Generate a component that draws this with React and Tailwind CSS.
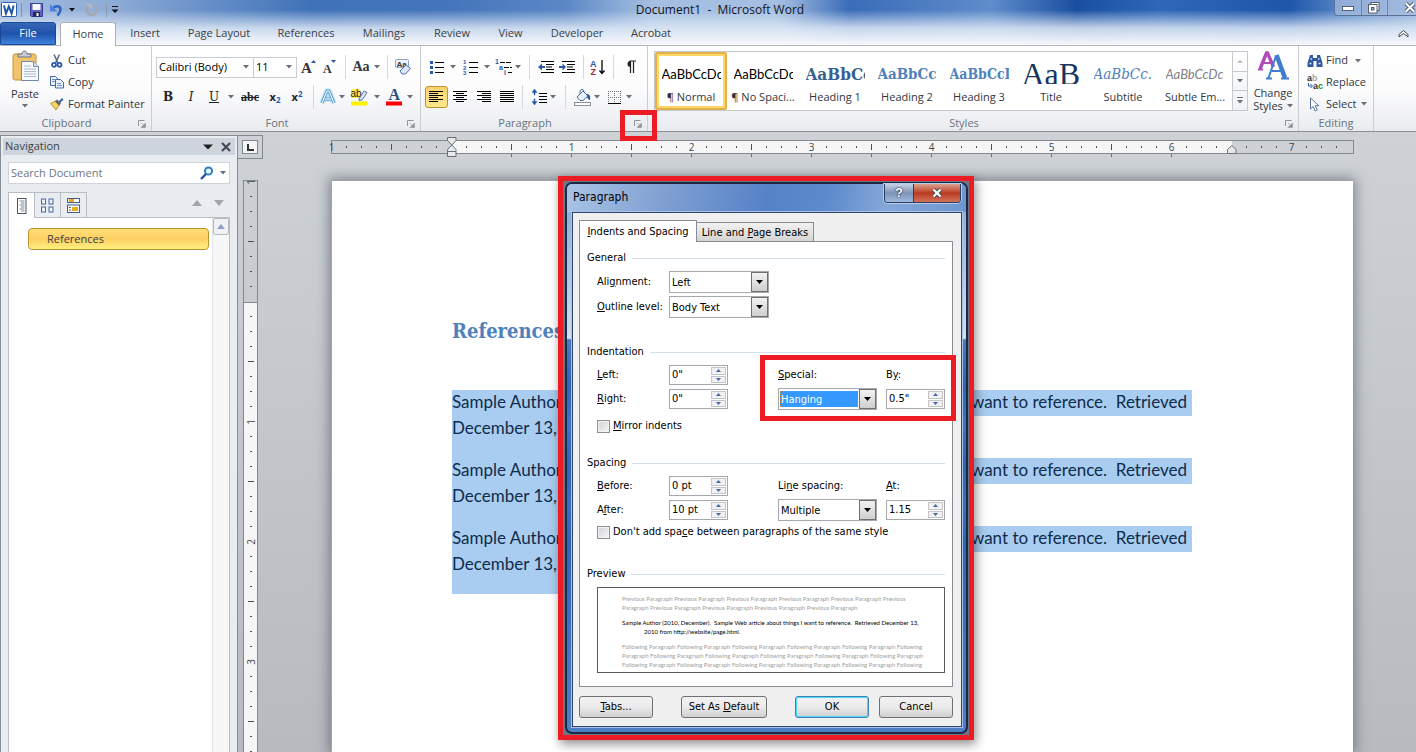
import React from "react";

const SERIF = "font-[family-name:'DejaVu_Serif_Condensed','DejaVu_Serif',serif]";
const BODY = "font-[family-name:Lato,'Open_Sans',sans-serif]";
const DIALOG = "font-[family-name:'DejaVu_Sans_Condensed','DejaVu_Sans',sans-serif]";

/* ---------- small shared pieces ---------- */

function Caret({ className = "" }) {
  return (
    <svg width="6" height="4" viewBox="0 0 6 4" className={"shrink-0 " + className} aria-hidden="true">
      <path d="M0 0h6L3 3.4z" fill="#6a6f77" />
    </svg>
  );
}

function ArrowButton({ label, className }) {
  return (
    <button aria-label={label} className={"flex h-5 items-center justify-center " + className}>
      <Caret />
    </button>
  );
}

function Separator({ className }) {
  return (
    <div className={"flex h-6 justify-center " + className}>
      <div className="h-full w-px bg-[#d5d8dd]" />
    </div>
  );
}

function LauncherIcon() {
  return (
    <svg width="8" height="8" viewBox="0 0 8 8" aria-hidden="true">
      <path d="M0.5 6V0.5H6.5" fill="none" stroke="#8d939b" />
      <path d="M3 3l2.5 2.5M7.5 3v4.5H3z" fill="#8d939b" stroke="#8d939b" strokeWidth="0.6" />
    </svg>
  );
}

function Group({ title, className, children, launcher, highlight }) {
  return (
    <section aria-label={title} className={"flex shrink-0 flex-col border-r border-[#c9ccd1] " + className}>
      <div className="flex h-[69px] pt-1">{children}</div>
      <div className="flex h-4 items-center">
        <span className="flex-1 text-center text-[#6a7280]">{title}</span>
        {launcher && (
          <span className="flex w-[18px] justify-center">
            <button aria-label={title + " settings"} className="relative mt-0.5">
              <LauncherIcon />
              {highlight && (
                <span className="pointer-events-none absolute -left-[14px] -top-[10px] z-10 h-[31px] w-[37px] border-[5px] border-[#ed1c24]" />
              )}
            </button>
          </span>
        )}
      </div>
    </section>
  );
}

/* ---------- title bar ---------- */

function TitleBar() {
  return (
    <div className="flex h-[22px] items-start">
      <div className="flex h-5 w-[130px] shrink-0 items-center">
        <svg width="20" height="20" viewBox="0 0 20 20" aria-hidden="true">
          <rect x="1.5" y="2.5" width="15" height="14" rx="1" fill="#fff" stroke="#2a5ea8" />
          <path d="M4 5.5l2 8 2.8-7 2.8 7 2-8" fill="none" stroke="#1f56a5" strokeWidth="2" />
        </svg>
        <span className="ml-px h-3.5 w-px bg-[#7f95b6]" />
        <button aria-label="Save" className="ml-1.5">
          <svg width="16" height="16" viewBox="0 0 16 16">
            <path d="M2.5 1.5h12v13h-11l-1-1z" fill="#5b63c9" stroke="#3a3f94" />
            <rect x="4.5" y="2" width="8" height="6" fill="#f6f8fd" />
            <rect x="5" y="10" width="7" height="4.5" fill="#26284f" />
            <rect x="8.5" y="11" width="2" height="3" fill="#fff" />
          </svg>
        </button>
        <button aria-label="Undo" className="ml-1">
          <svg width="18" height="16" viewBox="0 0 18 16">
            <path d="M4.5 7C7 3.5 12.5 3 12.5 7.5c0 2.5-1.5 4-3 6" fill="none" stroke="#2f66c4" strokeWidth="2.6" />
            <path d="M2 2v7.5h7.5z" fill="#4d82d8" />
          </svg>
        </button>
        <button aria-label="Undo history" className="flex h-5 w-3 items-center justify-center">
          <svg width="6" height="4" viewBox="0 0 6 4"><path d="M0 0h6L3 3.4z" fill="#111" /></svg>
        </button>
        <button aria-label="Repeat" className="ml-1.5">
          <svg width="16" height="16" viewBox="0 0 16 16">
            <path d="M10.5 3.6a5 5 0 1 1-6.500 1" fill="none" stroke="#a3a7af" strokeWidth="2.8" />
            <path d="M1.500 1.500h6.500v6z" fill="#b4b7bd" />
          </svg>
        </button>
        <span className="ml-1.5 h-3.5 w-px bg-[#8797ae]" />
        <button aria-label="Customize quick access" className="ml-1">
          <svg width="8" height="8" viewBox="0 0 8 8">
            <path d="M1 0.5h6" stroke="#111" />
            <path d="M0.5 3.5h7L4 7z" fill="#111" />
          </svg>
        </button>
      </div>
      <h1 className="flex-1 whitespace-pre pr-6 text-center text-xs leading-5 text-[#10151c]">Document1  -  Microsoft Word</h1>
      <div className="flex h-4 w-[82px] shrink-0 overflow-hidden rounded-bl border-b border-l border-[#5b7194] bg-[#a9bfdf]/70">
        <button aria-label="Minimize" className="flex w-7 items-center justify-center border-r border-[#6d84a8]">
          <svg width="14" height="8" viewBox="0 0 14 8"><rect x="1.5" y="2.5" width="11" height="4" fill="#fff" stroke="#555f70" /></svg>
        </button>
        <button aria-label="Restore" className="flex w-7 items-center justify-center border-r border-[#6d84a8]">
          <svg width="14" height="14" viewBox="0 0 14 14">
            <rect x="4" y="1.5" width="8" height="8" fill="#fff" stroke="#555f70" />
            <rect x="1.5" y="3.5" width="8.5" height="8.5" fill="#fff" stroke="#555f70" />
            <rect x="4.5" y="6.5" width="2.5" height="2.5" fill="#8fabd3" stroke="#555f70" />
          </svg>
        </button>
        <button aria-label="Close" className="flex w-7 shrink-0 items-center justify-end">
          <svg width="12" height="12" viewBox="0 0 12 12"><path d="M2 1.5l8 8M10 1.5l-8 8" stroke="#555f70" strokeWidth="4" /><path d="M2 1.5l8 8M10 1.5l-8 8" stroke="#fff" strokeWidth="2" /></svg>
        </button>
      </div>
    </div>
  );
}

function RibbonTabs() {
  const tabs = [
    ["Insert", "w-[58px]"],
    ["Page Layout", "w-[90px]"],
    ["References", "w-[84px]"],
    ["Mailings", "w-[72px]"],
    ["Review", "w-16"],
    ["View", "w-[53px]"],
    ["Developer", "w-20"],
    ["Acrobat", "w-[68px]"],
  ];
  return (
    <nav className="flex h-6 items-stretch border-b border-[#b3b9c2] text-[#3b3f45]">
      <button className="w-14 rounded-t-[3px] border border-[#1c4a9b] bg-linear-to-b from-[#3567b8] via-[#1f52ab] to-[#3f83dc] text-white">File</button>
      <button className="-mb-px ml-1 w-14 rounded-t-[3px] border border-b-0 border-[#a9b1bd] bg-white">Home</button>
      {tabs.map(([name, w]) => (
        <button key={name} className={"shrink-0 whitespace-nowrap " + w}>{name}</button>
      ))}
      <span className="flex-1" />
      <button aria-label="Minimize the ribbon" className="w-[18px]">
        <svg width="11" height="9" viewBox="0 0 11 9"><path d="M1 5.5L5.5 1.5 10 5.5v2.3L5.5 4.6 1 7.8z" fill="#fff" stroke="#3c4450" /></svg>
      </button>
    </nav>
  );
}

/* ---------- ribbon groups ---------- */

function ClipboardGroup() {
  return (
    <Group title="Clipboard" className="w-[152px]" launcher>
      <button className="flex w-[50px] flex-col items-center">
        <svg width="30" height="32" viewBox="0 0 30 32" aria-hidden="true">
          <rect x="3" y="4" width="23" height="26" rx="2" fill="#f0c36c" stroke="#c8923a" />
          <path d="M8 7V4h4c0-4 5-4 5 0h4v3z" fill="#c9ccd1" stroke="#6f747c" />
          <path d="M11.5 11.5h12l5 5v14h-17z" fill="#f7f9fc" stroke="#7189ad" />
          <path d="M23.5 11.5v5h5" fill="#dbe4f0" stroke="#7189ad" />
          <path d="M14 16h7M14 19h12M14 21.5h12M14 24h12M14 26.5h12" stroke="#a9bbd5" />
        </svg>
        <span className="mt-1 leading-4">Paste</span>
        <Caret className="mt-0.5" />
      </button>
      <div className="flex flex-col">
        <button className="flex h-[21px] items-center gap-1">
          <svg width="14" height="14" viewBox="0 0 14 14" aria-hidden="true">
            <path d="M4 0.5l4 8.5M9.5 0.5L5.5 9" stroke="#5a6880" strokeWidth="1.5" fill="none" />
            <circle cx="4" cy="10.8" r="2" fill="none" stroke="#2a58ad" strokeWidth="1.8" />
            <circle cx="9.5" cy="10.8" r="2" fill="none" stroke="#2a58ad" strokeWidth="1.8" />
          </svg>
          Cut
        </button>
        <button className="flex h-[22px] items-center gap-1">
          <svg width="14" height="14" viewBox="0 0 14 14" aria-hidden="true">
            <path d="M0.5 1.5h5l2 2v7h-7z" fill="#eaf1fb" stroke="#3e69ad" />
            <path d="M5.5 4.5h5l3 3v5.5h-8z" fill="#eaf1fb" stroke="#3e69ad" />
            <path d="M2 4.5h3M2 6.5h3M7 8.5h4M7 10.5h5" stroke="#6f93cb" />
          </svg>
          Copy
        </button>
        <button className="flex h-[22px] items-center gap-1 whitespace-nowrap">
          <svg width="14" height="14" viewBox="0 0 14 14" aria-hidden="true">
            <path d="M0.5 6.5l5-2.5 4 4-3.500 5z" fill="#f4d35e" stroke="#a8882b" strokeWidth="0.8" />
            <path d="M5 4.500l2-2 4 4-2 2z" fill="#5c6069" />
            <path d="M8.5 4.5L12 1l1.5 1.5L10 6z" fill="#3a62ae" />
          </svg>
          Format Painter
        </button>
      </div>
    </Group>
  );
}

function FontGroup() {
  return (
    <Group title="Font" className="w-[269px]" launcher>
      <div className="flex flex-col gap-2 pl-1 pt-1.5">
        <div className="flex h-[22px] items-center">
          <label className="flex h-[21px] w-[98px] items-center border border-[#c9ccd2] bg-white pr-1">
            <input aria-label="Font name" defaultValue="Calibri (Body)" className="w-full min-w-0 bg-transparent pl-0.5 text-black outline-none" />
            <Caret />
          </label>
          <label className="-ml-px flex h-[21px] w-11 items-center border border-[#c9ccd2] bg-white pr-1">
            <input aria-label="Font size" defaultValue="11" className="w-full min-w-0 bg-transparent pl-0.5 text-black outline-none" />
            <Caret />
          </label>
          <button aria-label="Grow font" className="flex w-[22px] justify-center">
            <svg width="16" height="16" viewBox="0 0 16 16"><text x="1" y="14" fontSize="15" fontWeight="bold" fill="#333" fontFamily="Liberation Serif">A</text><path d="M11 4h5l-2.5-3z" fill="#2a58ad" /></svg>
          </button>
          <button aria-label="Shrink font" className="flex w-[22px] justify-center">
            <svg width="16" height="16" viewBox="0 0 16 16"><text x="1" y="14" fontSize="12" fontWeight="bold" fill="#333" fontFamily="Liberation Serif">A</text><path d="M9 1h5l-2.5 3z" fill="#2a58ad" /></svg>
          </button>
          <Separator className="w-2" />
          <button aria-label="Change case" className="flex w-[34px] items-center justify-center gap-1 font-[family-name:'Liberation_Serif',serif] text-sm font-bold">Aa<Caret /></button>
          <Separator className="w-2" />
          <button aria-label="Clear formatting" className="flex w-6 justify-center">
            <svg width="18" height="18" viewBox="0 0 18 18">
              <rect x="1.5" y="1.5" width="13" height="8" rx="1" fill="#eef3fb" stroke="#8ba3c9" />
              <text x="2.5" y="8.5" fontSize="8" fontWeight="bold" fill="#333" fontFamily="Liberation Sans">Aa</text>
              <path d="M6 13l6-6 4.500 3.500-5 5.500H8z" fill="#dce8f8" stroke="#4a72b5" />
            </svg>
          </button>
        </div>
        <div className="flex h-[22px] items-center text-[#222]">
          <button aria-label="Bold" className="w-6 font-[family-name:'DejaVu_Serif',serif] text-xs font-bold">B</button>
          <button aria-label="Italic" className="w-[22px] font-[family-name:'DejaVu_Serif',serif] text-xs italic">I</button>
          <button aria-label="Underline" className="w-6 font-[family-name:'DejaVu_Serif',serif] text-xs underline">U</button>
          <ArrowButton label="Underline style" className="w-2.5" />
          <button aria-label="Strikethrough" className="w-7 font-[family-name:'Liberation_Serif',serif] text-xs font-bold line-through">abc</button>
          <button aria-label="Subscript" className="w-[22px] font-bold">x<sub className="text-[8px] text-[#2a58ad]">2</sub></button>
          <button aria-label="Superscript" className="w-[22px] font-bold">x<sup className="text-[8px] text-[#2a58ad]">2</sup></button>
          <Separator className="w-2.5" />
          <button aria-label="Text effects" className="flex w-5 justify-center">
            <svg width="18" height="18" viewBox="0 0 18 18">
              <path d="M3 15L8 3h2l5 12M5.5 11h7" fill="none" stroke="#b4dcf5" strokeWidth="5" strokeLinejoin="round" />
              <path d="M3 15L8 3h2l5 12M5.5 11h7" fill="none" stroke="#5b9fd2" strokeWidth="2.8" />
              <path d="M3 15L8 3h2l5 12M5.5 11h7" fill="none" stroke="#fff" strokeWidth="1" />
            </svg>
          </button>
          <ArrowButton label="Text effects menu" className="w-2" />
          <button aria-label="Highlight colour" className="flex w-[26px] justify-center">
            <svg width="18" height="18" viewBox="0 0 18 18">
              <rect x="1" y="1" width="9" height="9" fill="#fff04a" />
              <text x="0.5" y="9" fontSize="10" fill="#222" fontFamily="Liberation Sans">ab</text>
              <path d="M9 11l5-8 3 1.5-5 7.500-3 0.500z" fill="#dbe6f6" stroke="#5874a6" />
              <rect x="1" y="13.5" width="16" height="4" fill="#fff200" />
            </svg>
          </button>
          <ArrowButton label="Highlight menu" className="w-2.5" />
          <button aria-label="Font colour" className="flex w-6 justify-center">
            <svg width="16" height="18" viewBox="0 0 16 18">
              <text x="2.5" y="12" fontSize="16" fontWeight="bold" fill="#2b4d86" fontFamily="Liberation Serif">A</text>
              <rect y="13.5" width="16" height="4" fill="#f00" />
            </svg>
          </button>
          <ArrowButton label="Font colour menu" className="w-2" />
        </div>
      </div>
    </Group>
  );
}

function LinesIcon({ rows }) {
  return (
    <svg width="15" height="13" viewBox="0 0 15 13" aria-hidden="true">
      {rows.map(([x, w], i) => (
        <rect key={i} x={x} y={i * 2} width={w} height="1" fill="#000" />
      ))}
    </svg>
  );
}

function ParagraphGroup() {
  return (
    <Group title="Paragraph" className="w-[227px]" launcher highlight>
      <div className="flex flex-col gap-2 pl-1 pt-1.5">
        <div className="flex h-[22px] items-center">
          <button aria-label="Bullets" className="flex w-6 justify-center">
            <svg width="14" height="14" viewBox="0 0 14 14"><path d="M5 2.5h9M5 7.5h9M5 12.5h9" stroke="#000" /><path d="M0 1h3v3H0zM0 6h3v3H0zM0 11h3v3H0z" fill="#2a58ad" /></svg>
          </button>
          <ArrowButton label="Bullet library" className="w-2" />
          <button aria-label="Numbering" className="flex w-[26px] justify-center">
            <svg width="15" height="16" viewBox="0 0 15 16"><path d="M6 3.5h9M6 8.5h9M6 13.5h9" stroke="#000" /><g fontSize="6" fontWeight="bold" fill="#2a58ad" fontFamily="Liberation Sans"><text x="0" y="5">1</text><text x="0" y="10.500">2</text><text x="0" y="16">3</text></g></svg>
          </button>
          <ArrowButton label="Numbering library" className="w-2" />
          <button aria-label="Multilevel list" className="flex w-6 justify-center">
            <svg width="17" height="16" viewBox="0 0 17 16"><path d="M5 3.5h11M9 8.5h8M13 13.5h4" stroke="#000" strokeDasharray="5 1" /><g fontSize="7" fontWeight="bold" fill="#2a58ad" fontFamily="Liberation Sans"><text x="0" y="5">1</text><text x="4" y="10.5">a</text><text x="9" y="16">i</text></g></svg>
          </button>
          <ArrowButton label="Multilevel library" className="w-1.5" />
          <Separator className="w-4" />
          <button aria-label="Decrease indent" className="flex w-[18px] justify-center">
            <svg width="16" height="13" viewBox="0 0 16 13"><path d="M3 0.5h13M8 3.5h8M8 6h6M8 8.5h8M3 11.5h13" stroke="#000" strokeWidth="1.2" /><path d="M0 6l4-3.500V5h3v2H4v2.5z" fill="#2a58ad" /></svg>
          </button>
          <button aria-label="Increase indent" className="flex w-6 justify-center">
            <svg width="16" height="13" viewBox="0 0 16 13"><path d="M3 0.5h13M8 3.5h8M8 6h6M8 8.5h8M3 11.5h13" stroke="#000" strokeWidth="1.2" /><path d="M7 6L3.500 2.5V5H0v2h3.500v2.5z" fill="#2a58ad" /></svg>
          </button>
          <Separator className="w-2" />
          <button aria-label="Sort" className="flex w-[22px] justify-center">
            <svg width="16" height="16" viewBox="0 0 16 16"><text x="0" y="7.5" fontSize="9" fontWeight="bold" fill="#2a58ad" fontFamily="Liberation Sans">A</text><text x="0.5" y="15.5" fontSize="9" fontWeight="bold" fill="#9c2f36" fontFamily="Liberation Sans">Z</text><path d="M12 1v13M9.5 11.5L12 14.5l2.5-3" fill="none" stroke="#000" strokeWidth="1.3" /></svg>
          </button>
          <Separator className="w-2" />
          <button aria-label="Show marks" className="flex w-7 justify-center">
            <svg width="12" height="14" viewBox="0 0 12 14"><path d="M5.500 1a3 3 0 0 0 0 6z" fill="#222" /><path d="M5.500 0.500v12.500M8.5 0.500v12.500M4.500 1h6.5" stroke="#222" strokeWidth="1.2" /></svg>
          </button>
        </div>
        <div className="flex h-[22px] items-center">
          <button aria-label="Align left" className="flex h-[22px] w-[23px] items-center justify-center rounded-[3px] border border-[#c2912f] bg-linear-to-b from-[#fbd271] to-[#ffe78a]">
            <LinesIcon rows={[[0, 14], [0, 9], [0, 14], [0, 9], [0, 14], [0, 9]]} />
          </button>
          <button aria-label="Align centre" className="flex w-6 justify-center">
            <LinesIcon rows={[[0, 14], [3, 8], [0, 14], [3, 8], [0, 14], [3, 8]]} />
          </button>
          <button aria-label="Align right" className="flex w-6 justify-center">
            <LinesIcon rows={[[0, 14], [5, 9], [0, 14], [5, 9], [0, 14], [5, 9]]} />
          </button>
          <button aria-label="Justify" className="flex w-[22px] justify-center">
            <LinesIcon rows={[[0, 14], [0, 14], [0, 14], [0, 14], [0, 14], [0, 14]]} />
          </button>
          <Separator className="w-2" />
          <button aria-label="Line spacing" className="flex w-[22px] justify-end">
            <svg width="16" height="16" viewBox="0 0 16 16"><path d="M7 4.5h8M7 7.5h8M7 10.5h8M7 13.5h8" stroke="#000" /><path d="M2.5 0L5 3.5H0zM2.5 16L5 12.5H0zM2 3h1v3H2zM2 10h1v3H2z" fill="#2a58ad" stroke="#2a58ad" strokeWidth="0.5" /></svg>
          </button>
          <ArrowButton label="Line spacing menu" className="w-2.5" />
          <Separator className="w-3.5" />
          <button aria-label="Shading" className="flex w-5 justify-center">
            <svg width="17" height="17" viewBox="0 0 17 17"><path d="M3 8l6-6 5 5-5 4.5H6z" fill="#e9eff9" stroke="#4a6a9f" /><path d="M6 5V2.5a2 2 0 0 1 4 0" fill="none" stroke="#4a6a9f" /><path d="M13 5c3 0 3.500 3 3 6C14 11 12.5 8 13 5z" fill="#2a58ad" /><rect x="0.5" y="13.5" width="16" height="3" fill="#fff" stroke="#8b8f96" /></svg>
          </button>
          <ArrowButton label="Shading menu" className="w-2.5" />
          <button aria-label="Borders" className="flex w-6 justify-center">
            <svg width="13" height="13" viewBox="0 0 13 13"><path d="M0.5 0v12M12.5 0v12M6.5 0v12M0 0.5h13M0 6.5h13" stroke="#6b6f76" strokeDasharray="1 1" /><path d="M0 12.5h13" stroke="#000" /></svg>
          </button>
          <ArrowButton label="Borders menu" className="w-1.5" />
        </div>
      </div>
    </Group>
  );
}

const STYLES = [
  { name: "¶ Normal", sample: "AaBbCcDc", cls: "text-[13px] text-black " + BODY, active: true },
  { name: "¶ No Spaci...", sample: "AaBbCcDc", cls: "text-[13px] text-black " + BODY },
  { name: "Heading 1", sample: "AaBbCc", cls: "text-[17px] font-bold text-[#365f91] " + SERIF },
  { name: "Heading 2", sample: "AaBbCc", cls: "text-[15px] font-bold text-[#4f81bd] " + SERIF },
  { name: "Heading 3", sample: "AaBbCcD", cls: "text-sm font-bold text-[#4f81bd] " + SERIF },
  { name: "Title", sample: "AaB", cls: "text-[32px] text-[#17365d] font-[family-name:'Liberation_Serif',serif]" },
  { name: "Subtitle", sample: "AaBbCc.", cls: "text-[15px] italic text-[#4f81bd] " + SERIF },
  { name: "Subtle Em...", sample: "AaBbCcDc", cls: "text-[13px] italic text-[#808080] " + BODY },
];

function StylesGroup() {
  return (
    <Group title="Styles" className="min-w-0 flex-1" launcher>
      <div className="ml-1.5 mt-px flex h-[60px] min-w-0 flex-1 border border-[#c5c8ce] bg-white">
        <div className="flex min-w-0 flex-1 overflow-hidden">
          {STYLES.map((s) => (
            <button
              key={s.name}
              className={
                "flex w-[72px] shrink-0 flex-col items-center rounded-[2px] border-2 " +
                (s.active ? "border-[#e3b04b] ring-2 ring-[#ffd765] ring-inset" : "border-transparent")
              }
            >
              <span className={"flex h-[30px] w-[59px] items-center overflow-hidden whitespace-nowrap pt-2.5 leading-5 " + s.cls}>{s.sample}</span>
              <span className="mt-[3px] whitespace-nowrap leading-5">{s.name}</span>
            </button>
          ))}
        </div>
        <div className="flex w-[15px] shrink-0 flex-col divide-y divide-[#c5c8ce] border-l border-[#c5c8ce] bg-linear-to-b from-white to-[#f1f2f5]">
          <button aria-label="Scroll styles up" className="flex flex-1 items-center justify-center"><Caret className="rotate-180 opacity-40" /></button>
          <button aria-label="Scroll styles down" className="flex flex-1 items-center justify-center"><Caret /></button>
          <button aria-label="More styles" className="flex flex-1 flex-col items-center justify-center gap-0.5"><span className="h-px w-1.5 bg-[#6a6f77]" /><Caret /></button>
        </div>
      </div>
      <button className="flex w-[50px] shrink-0 flex-col items-center text-center leading-[13px]">
        <svg width="32" height="30" viewBox="0 0 32 30" aria-hidden="true">
          <path d="M3 19L9.500 3h1l6 14" fill="none" stroke="#b04bb8" strokeWidth="3.4" />
          <path d="M6 13h9M1 19.500h5" stroke="#b04bb8" strokeWidth="2" />
          <path d="M19.500 5L28 28" fill="none" stroke="#3f7cd0" strokeWidth="4.500" />
          <path d="M19 6l-7.500 22M15 21h10M9 28.500h6M24 28.500h8" fill="none" stroke="#3f7cd0" strokeWidth="2" />
        </svg>
        <span className="mt-1.5">Change</span>
        <span className="flex items-center gap-1">Styles<Caret /></span>
      </button>
    </Group>
  );
}

function EditingGroup() {
  return (
    <Group title="Editing" className="w-[75px]">
      <div className="flex flex-col pl-2">
        <button className="flex h-[21px] items-center gap-[3px]">
          <svg width="16" height="14" viewBox="0 0 16 14" aria-hidden="true">
            <path d="M3 1h3v3h4V1h3l2.5 8v4h-6V7h-3v6h-6V9z" fill="#31599f" />
            <path d="M2.5 9.5h2M11.5 9.5h2M3.5 5h1.500M11 5h1.500" stroke="#dbe6f8" strokeWidth="1.3" />
          </svg>
          Find<Caret className="ml-1" />
        </button>
        <button className="flex h-[22px] items-center gap-[3px]">
          <svg width="16" height="16" viewBox="0 0 16 16" aria-hidden="true">
            <g fontSize="9" fontWeight="bold" fontFamily="Liberation Sans"><text x="0" y="7" fill="#333">a</text><text x="5" y="7" fill="#aaa">b</text><text x="6" y="15" fill="#333">a</text><text x="11" y="15" fill="#159427">c</text></g>
            <path d="M1.5 9v3h3M3.5 10l2 2-2 2" fill="none" stroke="#2a58ad" />
          </svg>
          Replace
        </button>
        <button className="flex h-[22px] items-center gap-[3px]">
          <svg width="16" height="15" viewBox="0 0 16 15" aria-hidden="true"><path d="M3.5 1v11l2.7-2.5 2 4.5 2-1-2-4.3h3.6z" fill="#fff" stroke="#5b76a6" /></svg>
          Select<Caret className="ml-0.5" />
        </button>
      </div>
    </Group>
  );
}

/* ---------- navigation pane ---------- */

function NavigationPane() {
  return (
    <aside className="flex w-[238px] shrink-0 flex-col border-l border-r border-t border-[#868c94] bg-[#e9ecf1] text-[#3b3f45]">
      <header className="mx-0.5 mt-0.5 flex h-[17px] items-center bg-[#cdd4dd] pl-0.5 pr-1">
        <h2 className="flex-1">Navigation</h2>
        <button aria-label="Pane options" className="mr-2"><svg width="10" height="6" viewBox="0 0 10 6"><path d="M0 0.5h10L5 5.5z" fill="#222" /></svg></button>
        <button aria-label="Close pane"><svg width="10" height="10" viewBox="0 0 10 10"><path d="M1 1l8 8M9 1L1 9" stroke="#444a52" strokeWidth="2.2" /></svg></button>
      </header>
      <div className="mx-[7px] mt-[7px] flex h-[22px] items-center border border-[#d0d4da] bg-white pr-[3px]">
        <input aria-label="Search document" placeholder="Search Document" className="min-w-0 flex-1 bg-transparent pl-0.5 outline-none placeholder:text-[#6f757e]" />
        <button aria-label="Search"><svg width="14" height="14" viewBox="0 0 14 14"><circle cx="8.5" cy="5" r="3.6" fill="#e6f4fc" stroke="#2f7fc4" strokeWidth="2" /><path d="M6 8l-5 5" stroke="#2450a4" strokeWidth="2.4" /></svg></button>
        <button aria-label="Search options" className="ml-1.5"><Caret /></button>
      </div>
      <div className="mx-[7px] mt-2 flex h-[25px] items-stretch">
        <button aria-label="Browse headings" className="relative -mb-px flex w-[27px] items-center justify-center border border-b-0 border-[#b9bdc4] bg-white">
          <svg width="10" height="16" viewBox="0 0 10 16"><rect x="0.5" y="0.5" width="8.5" height="15" fill="#fff" stroke="#4c5563" /><path d="M2.5 3h5M4 5h3.5M2.5 7h5M4 9h3.5M2.5 11h5M4 13h3.5" stroke="#7c8698" /></svg>
        </button>
        <button aria-label="Browse pages" className="flex w-[26px] items-center justify-center border-r border-t border-[#b9bdc4]">
          <svg width="13" height="15" viewBox="0 0 13 15"><g fill="#eef4fc" stroke="#4a6796"><rect x="0.5" y="1" width="4" height="5" /><rect x="8" y="1" width="4" height="5" /><rect x="0.5" y="9" width="4" height="5" /><rect x="8" y="9" width="4" height="5" /></g></svg>
        </button>
        <button aria-label="Browse results" className="flex w-[26px] items-center justify-center border-r border-t border-[#b9bdc4]">
          <svg width="13" height="15" viewBox="0 0 13 15"><rect x="0.5" y="0.5" width="12" height="4" fill="#fff" stroke="#4a5f84" /><rect x="2" y="1" width="5" height="3" fill="#f0a818" /><rect x="0.5" y="7" width="12" height="7.5" fill="#fff" stroke="#4a5f84" /><rect x="5" y="9" width="6" height="4" fill="#f0a818" /><path d="M2 9.5h2M2 12h2" stroke="#4a5f84" /></svg>
        </button>
        <span className="flex-1" />
        <button aria-label="Previous heading" className="mr-3 pb-1"><svg width="10" height="6" viewBox="0 0 10 6"><path d="M5 0l5 6H0z" fill="#a2a5aa" /></svg></button>
        <button aria-label="Next heading" className="mr-1.5 pb-1"><svg width="10" height="6" viewBox="0 0 10 6"><path d="M0 0h10L5 6z" fill="#a2a5aa" /></svg></button>
      </div>
      <div className="mx-[7px] flex flex-1 border border-b-0 border-[#b9bdc4] bg-white">
        <div className="flex-1 pl-[19px] pr-[3px] pt-[10px]">
          <button className="h-[22px] w-full rounded-[4px] border border-[#c2912f] bg-linear-to-b from-[#ffdf77] via-[#fdd062] to-[#fff07f] pl-[18px] text-left">References</button>
        </div>
        <div className="w-[17px] border-l border-[#e2e4e7] bg-[#f7f7f8]">
          <button aria-label="Scroll up" className="flex h-[17px] w-full items-center justify-center rounded-[2px] border border-[#b7bac0] bg-[#f0f1f4]">
            <svg width="8" height="5" viewBox="0 0 8 5"><path d="M4 0l4 5H0z" fill="#95a0c6" /></svg>
          </button>
        </div>
      </div>
    </aside>
  );
}

/* ---------- rulers and page ---------- */

function tickKind(k) {
  if (k % 8 === 0) return "number";
  return k % 4 === 0 ? "half" : "eighth";
}

function HorizontalRuler() {
  return (
    <div>
      <div className="grid h-[14px] grid-cols-1 border border-[#82888f]">
        <div className="flex [grid-area:1/1]">
          <span className="w-[120px]" />
          <span className="flex-1 bg-[#f6f6f6]" />
          <span className="w-[121px]" />
        </div>
        <div className="-ml-[8px] flex overflow-hidden text-[10px] leading-3 text-[#3f444b] [grid-area:1/1]">
          {Array.from({ length: 68 }, (_, k) => {
            const kind = k === 8 || k === 60 ? "none" : tickKind(k);
            return (
              <span key={k} className="flex w-[15px] shrink-0 items-center justify-center">
                {kind === "number" && Math.abs(k / 8 - 1)}
                {kind === "half" && <i className="h-1.5 w-px bg-[#4b5057]" />}
                {kind === "eighth" && <i className="h-0.5 w-px bg-[#4b5057]" />}
              </span>
            );
          })}
        </div>
      </div>
      <div className="flex h-1 overflow-hidden pl-[150px]">
        {Array.from({ length: 12 }, (_, i) => (
          <span key={i} className="flex w-[60px] shrink-0 justify-center"><i className="h-[3px] w-px bg-[#6a6f77]" /></span>
        ))}
      </div>
    </div>
  );
}

function VerticalRuler() {
  return (
    <div className="mx-auto h-[572px] min-h-full w-[15px] overflow-hidden border border-b-0 border-[#82888f]">
      <div className="grid h-full grid-cols-1 grid-rows-1">
        <div className="flex flex-col [grid-area:1/1]">
          <span className="h-[122px] border-b border-[#82888f]" />
          <span className="flex-1 bg-[#f6f6f6]" />
        </div>
        <div className="-mt-[7px] flex flex-col text-[10px] leading-3 text-[#3f444b] [grid-area:1/1]">
          {Array.from({ length: 39 }, (_, k) => {
            const kind = k === 8 ? "none" : tickKind(k);
            return (
              <span key={k} className="flex h-[15px] shrink-0 items-center justify-center">
                {kind === "number" && <b className="-rotate-90 font-normal">{Math.abs(k / 8 - 1)}</b>}
                {kind === "half" && <i className="h-px w-1.5 bg-[#4b5057]" />}
                {kind === "eighth" && <i className="h-px w-0.5 bg-[#4b5057]" />}
              </span>
            );
          })}
        </div>
      </div>
    </div>
  );
}

function Citation() {
  return (
    <div className="whitespace-pre">
      <p className="flex h-[26px] justify-between bg-[#a9cdf0] pr-[5px]">
        <span>Sample Author (2010, December).  Sample</span>
        <span>I want to reference.  Retrieved</span>
      </p>
      <p className="h-[42px] w-[380px] bg-[#a9cdf0]">December 13, 2010 from http://website/page.html.</p>
    </div>
  );
}

function Workspace() {
  return (
    <div className="flex min-w-0 flex-1 flex-col overflow-hidden bg-linear-to-b from-[#ced2d7] to-[#b7babf]">
      <div className="flex h-[45px] shrink-0">
        <div className="h-6 w-[25px] border border-l-0 border-[#82888f] p-1">
          <button aria-label="Tab selector" className="flex h-full w-full items-center justify-center border border-[#82888f] bg-[#f6f6f6]">
            <svg width="7" height="7" viewBox="0 0 7 7"><path d="M1 0v6h6" fill="none" stroke="#333" strokeWidth="2" /></svg>
          </button>
        </div>
        <div className="ml-[68px] mr-[62px] min-w-0 flex-1 pt-[5px]">
          <div className="relative">
            <HorizontalRuler />
            <svg width="10" height="20" viewBox="0 0 10 20" className="absolute -top-[3px] left-[116px]" aria-hidden="true">
              <path d="M0.5 0.5h8.5v3L4.800 8l4.200 4.500v2H0.5v-2L4.800 8 0.5 3.500zM0.5 14.500h8.5v5H0.5z" fill="#e8e9eb" stroke="#6a6f77" />
            </svg>
            <svg width="10" height="9" viewBox="0 0 10 9" className="absolute right-[117px] top-[5px]" aria-hidden="true">
              <path d="M0.5 8.500V4.500L4.800 0.500 9 4.500v4z" fill="#e8e9eb" stroke="#6a6f77" />
            </svg>
          </div>
        </div>
      </div>
      <div className="flex min-h-0 flex-1">
        <div className="w-[25px] shrink-0 overflow-hidden"><VerticalRuler /></div>
        <article className="ml-[68px] mr-[63px] min-w-0 flex-1 overflow-hidden border-l border-t border-[#a0a5ab] bg-white pl-[120px] pr-[161px] pt-[134px] shadow-[0_0_12px_2px_rgba(70,80,90,0.6)]">
          <h2 className={"h-[75px] text-[20px] font-bold leading-8 text-[#4f81bd] " + SERIF}>References</h2>
          <div className={"text-[17px] leading-[24px] text-[#0f2b4c] " + BODY}>
            <Citation />
            <Citation />
            <Citation />
          </div>
        </article>
      </div>
    </div>
  );
}

/* ---------- paragraph dialog ---------- */

function DialogSelect({ id, value, focused }) {
  return (
    <div className="flex h-[22px] items-stretch border border-[#a5a8ad] bg-white">
      <select
        id={id}
        defaultValue={value}
        className={
          "my-0.5 ml-px mr-px min-w-0 flex-1 appearance-none leading-4 outline-none " +
          (focused ? "border border-dotted border-[#d97a1c] bg-[#3399ff] text-white" : "border border-transparent bg-white text-black")
        }
      >
        <option>{value}</option>
      </select>
      <span className="flex w-[17px] items-center justify-center border border-[#707070] bg-linear-to-b from-[#f2f2f2] to-[#cfcfcf]">
        <svg width="7" height="4" viewBox="0 0 7 4" aria-hidden="true"><path d="M0 0h7L3.5 4z" fill="#000" /></svg>
      </span>
    </div>
  );
}

function Spinner({ id, value }) {
  return (
    <div className="flex h-5 border border-[#a5a8ad] bg-white p-px">
      <input id={id} defaultValue={value} className="min-w-0 flex-1 bg-transparent pl-px outline-none" />
      <span className="flex w-[15px] flex-col gap-px">
        <button aria-label="Increase" className="flex flex-1 items-center justify-center border border-[#c3c5c9] bg-[#f1f1f1]"><svg width="5" height="3" viewBox="0 0 5 3"><path d="M2.5 0L5 3H0z" fill="#4a62b0" /></svg></button>
        <button aria-label="Decrease" className="flex flex-1 items-center justify-center border border-[#c3c5c9] bg-[#f1f1f1]"><svg width="5" height="3" viewBox="0 0 5 3"><path d="M0 0h5L2.5 3z" fill="#4a62b0" /></svg></button>
      </span>
    </div>
  );
}

function SectionTitle({ children }) {
  return (
    <h3 className="flex h-4 items-center gap-1.5">
      {children}
      <span className="h-px flex-1 bg-[#d5dfe8]" />
    </h3>
  );
}

function CheckRow({ children }) {
  return (
    <label className="flex h-4 items-center gap-[3px]">
      <input type="checkbox" className="size-[13px] appearance-none border border-[#8e8f8f] bg-linear-to-br from-[#cfd3d8] to-[#f6f6f6] shadow-[inset_0_0_0_1px_#f4f4f4]" />
      {children}
    </label>
  );
}

function DialogButton({ children, className }) {
  return (
    <button className={"h-[22px] rounded-[3px] border bg-linear-to-b from-[#f2f2f2] via-[#ebebeb] to-[#cfcfcf] " + className}>{children}</button>
  );
}

const fields = "grid grid-cols-[72px_59px_50px_99px_9px_59px] items-center gap-y-[3px] pl-[10px] pt-[5px]";

function ParagraphDialog() {
  return (
    <div role="dialog" aria-label="Paragraph" className={"absolute left-[558px] top-[176px] w-[416px] border-[5px] border-[#ed1c24] bg-[#6d7684] py-px pl-0.5 pr-px text-[11px] leading-4 text-black shadow-[2px_4px_10px_rgba(0,0,0,0.45)] " + DIALOG}>
      <div className="rounded-[7px] border-2 border-[#1b2a42] bg-[linear-gradient(180deg,#5f8ac9_0,#8fb0dd_28px,#cfdef1_150px,#dde8f6_154px,#4a78bd_156px,#2e66b4_200px,#3f74c0_240px,#2e66b4_280px,#3a70bd_320px,#2e66b4_360px,#4f7fc4_100%)] pb-[5px] pl-[5px] pr-1">
        <div className="-ml-[5px] -mr-1 flex h-7 items-start rounded-t-[5px] bg-[linear-gradient(100deg,#a9c4e6_0,#7f9fd2_25%,#5682c8_50%,#5c8acb_65%,#86a8da_80%,#6c95d0_100%)]">
          <h2 className="flex-1 pl-1.5 pt-[5px] text-xs">Paragraph</h2>
          <div className="mr-[5px] flex h-[19px] overflow-hidden rounded-b-[4px] border border-t-0 border-[#2b3d5e] shadow-[0_0_0_1px_#b9cdea]">
            <button aria-label="Help" className="w-7 bg-linear-to-b from-[#c4d2e6] via-[#7d94b8] to-[#9fbbe0] font-[family-name:'Liberation_Sans',sans-serif] text-[13px] font-bold leading-4 text-white [text-shadow:0_0_2px_#223,0_0_1px_#223]">?</button>
            <button aria-label="Close dialog" className="flex w-[47px] items-center justify-center border-l border-[#2b3d5e] bg-linear-to-b from-[#dba08f] via-[#b93a20] to-[#d4715a]">
              <svg width="12" height="10" viewBox="0 0 12 10"><path d="M2.5 1.5l7 7M9.5 1.5l-7 7" stroke="#4b4b55" strokeWidth="4" /><path d="M2.5 1.5l7 7M9.5 1.5l-7 7" stroke="#fff" strokeWidth="2.2" /></svg>
            </button>
          </div>
        </div>
        <div className="border border-[#2e466e] bg-[#f0f0f0] pb-2 pl-1.5 pr-2 pt-[7px] shadow-[0_0_0_1px_#a9c2e6]">
          <div role="tablist" className="flex items-end">
            <button role="tab" aria-selected="true" className="relative z-10 -mb-px h-[22px] w-[118px] border border-b-0 border-[#898c95] bg-white"><u>I</u>ndents and Spacing</button>
            <button role="tab" aria-selected="false" className="h-[19px] w-[117px] border border-b-0 border-l-0 border-[#898c95] bg-linear-to-b from-[#f2f2f2] to-[#d4d4d4] leading-[17px]">Line and <u>P</u>age Breaks</button>
          </div>
          <div className="border border-[#898c95] bg-white px-[7px] pb-[13px] pt-2">
            <SectionTitle>General</SectionTitle>
            <div className="grid grid-cols-[72px_100px] items-center gap-y-[3px] pl-[10px] pt-[5px]">
              <label htmlFor="alignment">Ali<u>g</u>nment:</label>
              <DialogSelect id="alignment" value="Left" />
              <label htmlFor="outline"><u>O</u>utline level:</label>
              <DialogSelect id="outline" value="Body Text" />
            </div>

            <div className="mt-[26px]">
              <SectionTitle>Indentation</SectionTitle>
              <div className={"relative " + fields}>
                <label htmlFor="left"><u>L</u>eft:</label>
                <Spinner id="left" value={'0"'} />
                <span />
                <label htmlFor="special"><u>S</u>pecial:</label>
                <span />
                <label htmlFor="by">B<u>y</u>:</label>
                <label htmlFor="right"><u>R</u>ight:</label>
                <Spinner id="right" value={'0"'} />
                <span />
                <DialogSelect id="special" value="Hanging" focused />
                <span />
                <Spinner id="by" value={'0.5"'} />
                <span className="pointer-events-none absolute -right-[11px] -top-[5px] h-[66px] w-[196px] border-[5px] border-[#ed1c24]" />
              </div>
              <div className="pl-[10px] pt-2"><CheckRow><span><u>M</u>irror indents</span></CheckRow></div>
            </div>

            <div className="mt-[21px]">
              <SectionTitle>Spacing</SectionTitle>
              <div className={fields}>
                <label htmlFor="before"><u>B</u>efore:</label>
                <Spinner id="before" value="0 pt" />
                <span />
                <label htmlFor="line-spacing">Li<u>n</u>e spacing:</label>
                <span />
                <label htmlFor="at"><u>A</u>t:</label>
                <label htmlFor="after">A<u>f</u>ter:</label>
                <Spinner id="after" value="10 pt" />
                <span />
                <DialogSelect id="line-spacing" value="Multiple" />
                <span />
                <Spinner id="at" value="1.15" />
              </div>
              <div className="pl-[10px] pt-[3px]"><CheckRow><span>Don't add spa<u>c</u>e between paragraphs of the same style</span></CheckRow></div>
            </div>

            <div className="mt-[26px]">
              <SectionTitle>Preview</SectionTitle>
              <div className={"ml-[10px] mt-[5px] h-[86px] overflow-hidden border border-[#5a5a5a] py-[6px] pl-6 text-[6px] leading-[9px] whitespace-nowrap text-[#a0a0a0] " + BODY}>
                <p>Previous Paragraph Previous Paragraph Previous Paragraph Previous Paragraph Previous Paragraph Previous<br />Paragraph Previous Paragraph Previous Paragraph Previous Paragraph Previous Paragraph</p>
                <p className="py-1.5 text-black">Sample Author (2010, December).&nbsp; Sample Web article about things I want to reference.&nbsp; Retrieved December 13,<br /><span className="pl-[22px]">2010 from http://website/page.html.</span></p>
                <p>Following Paragraph Following Paragraph Following Paragraph Following Paragraph Following Paragraph Following<br />Paragraph Following Paragraph Following Paragraph Following Paragraph Following Paragraph Following Paragraph<br />Following Paragraph Following Paragraph Following Paragraph Following Paragraph Following Paragraph Following<br />Paragraph Following Paragraph Following Paragraph Following Paragraph Following Paragraph Following Paragraph</p>
              </div>
            </div>
          </div>
          <div className="mt-[9px] flex">
            <DialogButton className="w-[74px] border-[#707070]"><u>T</u>abs...</DialogButton>
            <DialogButton className="ml-7 w-[86px] border-[#707070]">Set As <u>D</u>efault</DialogButton>
            <DialogButton className="ml-auto w-[74px] border-[#3c7fb1] shadow-[inset_0_0_0_1px_#48d8fb]">OK</DialogButton>
            <DialogButton className="ml-[10px] w-[74px] border-[#707070]">Cancel</DialogButton>
          </div>
        </div>
      </div>
    </div>
  );
}

export default function App() {
  return (
    <div className="relative flex h-screen flex-col overflow-hidden bg-[#ced2d7] font-[family-name:'Open_Sans','Noto_Sans',sans-serif] text-[11px] text-[#33373d]">
      <header className="shrink-0">
        <div className="bg-[linear-gradient(180deg,transparent_0,transparent_10px,rgba(222,232,245,0.85)_28px,#fafbfd_46px),linear-gradient(90deg,#a3bcdf_0,#8eabd5_8%,#5f8ac5_16%,#3f72b8_22%,#4576bb_32%,#5c88c6_40%,#a5bfe2_46%,#a5bfe2_55%,#3a6cb8_60%,#5f8ccb_70%,#1a4fa0_76%,#2f68b8_82%,#1d56aa_91%,#5a88c8_95%,#8fb0dc_100%)]">
          <TitleBar />
          <RibbonTabs />
        </div>
        <div className="flex border-b border-[#8b9097] bg-linear-to-b from-white via-[#fcfcfd] to-[#e9ebef]">
          <ClipboardGroup />
          <FontGroup />
          <ParagraphGroup />
          <StylesGroup />
          <EditingGroup />
          <span className="w-[42px] shrink-0" />
        </div>
      </header>
      <main className="flex min-h-0 flex-1 pt-[3px]">
        <NavigationPane />
        <Workspace />
      </main>
      <ParagraphDialog />
    </div>
  );
}
